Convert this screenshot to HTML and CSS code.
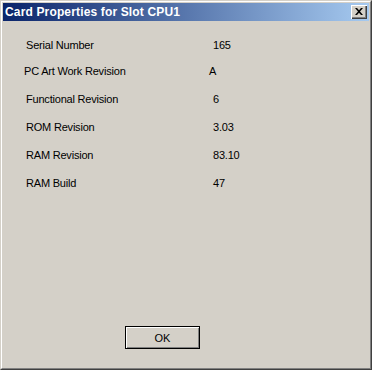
FILE: index.html
```html
<!DOCTYPE html>
<html>
<head>
<meta charset="utf-8">
<title>Card Properties for Slot CPU1</title>
<link rel="stylesheet" href="styles.css">
</head>
<body>
<div class="window">
  <div class="frame">
    <div class="titlebar">
      <span class="title">Card Properties for Slot CPU1</span>
      <span class="close" aria-label="Close">
        <svg width="8" height="7" viewBox="0 0 8 7">
          <path d="M0 0h2l2 2.3L6 0h2L5 3.5 8 7H6L4 4.7 2 7H0l3-3.5z" fill="#000"/>
        </svg>
      </span>
    </div>
    <div class="body">
      <div class="props">
        <div class="row"><span class="label">Serial Number</span><span class="value">165</span></div>
        <div class="row shift"><span class="label">PC Art Work Revision</span><span class="value">A</span></div>
        <div class="row"><span class="label">Functional Revision</span><span class="value">6</span></div>
        <div class="row"><span class="label">ROM Revision</span><span class="value">3.03</span></div>
        <div class="row"><span class="label">RAM Revision</span><span class="value">83.10</span></div>
        <div class="row"><span class="label">RAM Build</span><span class="value">47</span></div>
      </div>
      <div class="footer">
        <button class="btn default">OK</button>
      </div>
    </div>
  </div>
</div>
</body>
</html>
```

FILE: styles.css
```css
html, body {
  margin: 0;
  padding: 0;
  background: #d4d0c8;
}

.window {
  width: 372px;
  height: 370px;
  box-sizing: border-box;
  border: 1px solid;
  border-color: #d4d0c8 #404040 #404040 #d4d0c8;
  background: #d4d0c8;
  font-family: "Liberation Sans", Arial, sans-serif;
  font-size: 11px;
  color: #000;
}

.frame {
  height: 100%;
  box-sizing: border-box;
  border: 1px solid;
  border-color: #ffffff #808080 #808080 #ffffff;
  padding: 1px;
  display: flex;
  flex-direction: column;
}

.titlebar {
  height: 18px;
  flex: none;
  display: flex;
  align-items: center;
  justify-content: space-between;
  padding: 0 2px;
  background: linear-gradient(to right, #0a246a, #a6caf0);
}

.title {
  color: #fff;
  font-weight: bold;
  font-size: 12px;
  letter-spacing: 0.15px;
  white-space: nowrap;
}

.close {
  width: 16px;
  height: 14px;
  box-sizing: border-box;
  background: #d4d0c8;
  box-shadow: inset 1px 1px #ffffff, inset -1px -1px #404040, inset -2px -2px #808080;
  display: flex;
  align-items: center;
  justify-content: center;
  padding: 0 1px 1px 0;
}

.close svg {
  display: block;
}

.body {
  flex: 1;
  display: flex;
  flex-direction: column;
}

.props {
  margin-top: 17px;
  padding-left: 23px;
  display: grid;
  grid-template-rows: 26px repeat(5, 28px);
  letter-spacing: -0.2px;
}

.row {
  display: grid;
  grid-template-columns: 187px auto;
  line-height: 14px;
}

.row.shift {
  margin-left: -2px;
}

.row.shift .value {
  margin-left: -2px;
}

.footer {
  margin-top: auto;
  padding: 0 0 18px 122px;
}

.btn {
  width: 75px;
  height: 23px;
  box-sizing: border-box;
  margin: 0;
  padding: 0;
  background: #d4d0c8;
  border: 1px solid #000;
  box-shadow: inset 1px 1px #ffffff, inset -1px -1px #808080;
  font-family: "Liberation Sans", Arial, sans-serif;
  font-size: 11px;
  color: #000;
  display: block;
}
```
